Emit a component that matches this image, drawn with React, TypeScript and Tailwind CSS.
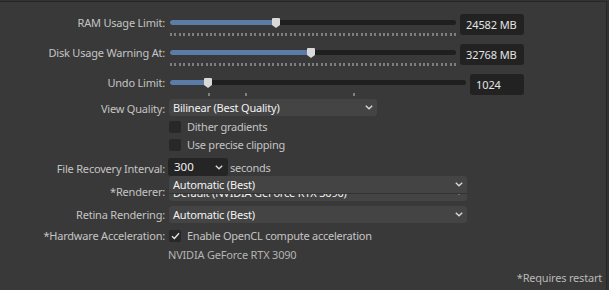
import React from "react";

const font = { fontFamily: '"Noto Sans", "Open Sans", sans-serif' };

function Chevron() {
  return (
    <svg width="8" height="5" viewBox="0 0 8 5" className="shrink-0">
      <path d="M0.8 0.8 L4 3.8 L7.2 0.8" fill="none" stroke="#d8d8d8" strokeWidth="1.4" />
    </svg>
  );
}

function Thumb({ left }: { left: number }) {
  return (
    <svg
      width="8"
      height="10"
      viewBox="0 0 8 10"
      className="absolute top-[-2px]"
      style={{ left: left - 4 }}
    >
      <path d="M1 0 H7 Q8 0 8 1 V7 L4 10 L0 7 V1 Q0 0 1 0 Z" fill="#d9d9d9" />
    </svg>
  );
}

function Slider({
  width,
  value,
  ticks,
}: {
  width: number;
  value: number;
  ticks: number[];
}) {
  return (
    <div className="ml-[5px] flex flex-col" style={{ width }}>
      <div className="relative mt-[6px] h-[5px] rounded-full bg-[#1f1f1f]">
        <div
          className="h-full rounded-full bg-[#5a7ca6]"
          style={{ width: value }}
        />
        <Thumb left={value} />
      </div>
      <div className="relative mt-[8px] h-[3px]">
        {ticks.map((t, i) => (
          <div
            key={i}
            className="absolute top-0 h-[3px] w-[2px] bg-[#7f7f7f]"
            style={{ left: t - 1 }}
          />
        ))}
      </div>
    </div>
  );
}

function Label({ children, h = 17 }: { children: React.ReactNode; h?: number }) {
  return (
    <div
      className="w-[165px] shrink-0 text-right text-[11px] tracking-[-0.2px] text-[#c4c4c4] whitespace-nowrap"
      style={{ lineHeight: `${h}px` }}
    >
      {children}
    </div>
  );
}

function ValueBox({ w, children }: { w: number; children: React.ReactNode }) {
  return (
    <div
      className="ml-[4px] h-[21px] rounded-[3px] bg-[#222222] pl-[6px] text-[11px] tracking-[-0.1px] leading-[22px] text-[#e4e4e4]"
      style={{ width: w }}
    >
      {children}
    </div>
  );
}

function Dropdown({
  w,
  children,
  className = "",
}: {
  w: number;
  children: React.ReactNode;
  className?: string;
}) {
  return (
    <div
      className={`flex h-[17px] items-center justify-between rounded-[3px] bg-[#444444] pl-[4px] pr-[4px] text-[11px] tracking-[-0.2px] text-[#f2f2f2] ${className}`}
      style={{ width: w }}
    >
      <span className="whitespace-nowrap leading-[17px]">{children}</span>
      <Chevron />
    </div>
  );
}

function Check({ checked = false }: { checked?: boolean }) {
  return (
    <div className="flex h-[12px] w-[12px] items-center justify-center rounded-[2px] bg-[#282828]">
      {checked && (
        <svg width="9" height="8" viewBox="0 0 9 8">
          <path d="M1 4.2 L3.4 6.5 L8 1.2" fill="none" stroke="#e6e6e6" strokeWidth="1.3" />
        </svg>
      )}
    </div>
  );
}

const ramTicks = Array.from({ length: 65 }, (_, i) => 1 + i * (284 / 64));

const txt = "text-[11px] tracking-[-0.25px] text-[#c4c4c4]";

export default function App() {
  return (
    <div className="h-[290px] w-[609px] overflow-hidden bg-[#333333]" style={font}>
      <div className="mt-[1px] h-[289px] w-[607px] border-t border-r border-[#262626] bg-[#393939] pt-[12px]">
        {/* RAM */}
        <div className="flex h-[30px] items-start">
          <Label>RAM Usage Limit:</Label>
          <Slider width={286} value={106} ticks={ramTicks} />
          <ValueBox w={64}>24582 MB</ValueBox>
        </div>
        {/* Disk */}
        <div className="flex h-[30px] items-start">
          <Label>Disk Usage Warning At:</Label>
          <Slider width={286} value={141} ticks={ramTicks} />
          <ValueBox w={64}>32768 MB</ValueBox>
        </div>
        {/* Undo */}
        <div className="flex h-[25px] items-start">
          <Label>Undo Limit:</Label>
          <Slider width={296} value={38} ticks={[39, 76, 184]} />
          <ValueBox w={54}>1024</ValueBox>
        </div>
        {/* View Quality */}
        <div className="flex h-[17px] items-start">
          <Label h={19}>View Quality:</Label>
          <div className="ml-[4px]">
            <Dropdown w={208}>Bilinear (Best Quality)</Dropdown>
          </div>
        </div>
        {/* checkboxes */}
        <div className="mt-[2px] flex h-[18px] items-center pl-[169px]">
          <Check />
          <span className={`ml-[6px] ${txt}`}>Dither gradients</span>
        </div>
        <div className="flex h-[18px] items-center pl-[169px]">
          <Check />
          <span className={`ml-[6px] ${txt}`}>Use precise clipping</span>
        </div>
        {/* File recovery */}
        <div className="mt-[4px] flex h-[18px] items-start">
          <Label h={21}>File Recovery Interval:</Label>
          <div className="ml-[3px] flex h-[18px] w-[60px] items-center justify-between rounded-[3px] bg-[#252525] pl-[6px] pr-[5px] text-[11.5px] text-[#f0f0f0]">
            <span className="leading-[18px]">300</span>
            <Chevron />
          </div>
          <span className={`ml-[2px] leading-[20px] ${txt}`}>seconds</span>
        </div>
        {/* Renderer */}
        <div className="mt-[8px] flex h-[17px] items-start">
          <Label h={15}>*Renderer:</Label>
          <div className="relative ml-[4px]">
            <Dropdown w={298}>Default (NVIDIA GeForce RTX 3090)</Dropdown>
            <div className="absolute left-0 top-[-8px] border-b border-[#333333]">
              <Dropdown w={298}>Automatic (Best)</Dropdown>
            </div>
          </div>
        </div>
        {/* Retina */}
        <div className="mt-[5px] flex h-[17px] items-start">
          <Label>Retina Rendering:</Label>
          <div className="ml-[4px]">
            <Dropdown w={298}>Automatic (Best)</Dropdown>
          </div>
        </div>
        {/* HW */}
        <div className="mt-[4px] flex h-[18px] items-center">
          <Label h={18}>*Hardware Acceleration:</Label>
          <div className="ml-[4px] flex items-center">
            <Check checked />
            <span className={`ml-[6px] ${txt}`}>Enable OpenCL compute acceleration</span>
          </div>
        </div>
        <div className="mt-[2px] h-[16px] pl-[168px] text-[11px] leading-[16px] tracking-[-0.2px] text-[#b4b4b4]">
          NVIDIA GeForce RTX 3090
        </div>
        <div className="mt-[7px] h-[16px] pr-[4px] text-right text-[11px] leading-[16px] tracking-[-0.2px] text-[#b8b8b8]">
          *Requires restart
        </div>
      </div>
    </div>
  );
}
